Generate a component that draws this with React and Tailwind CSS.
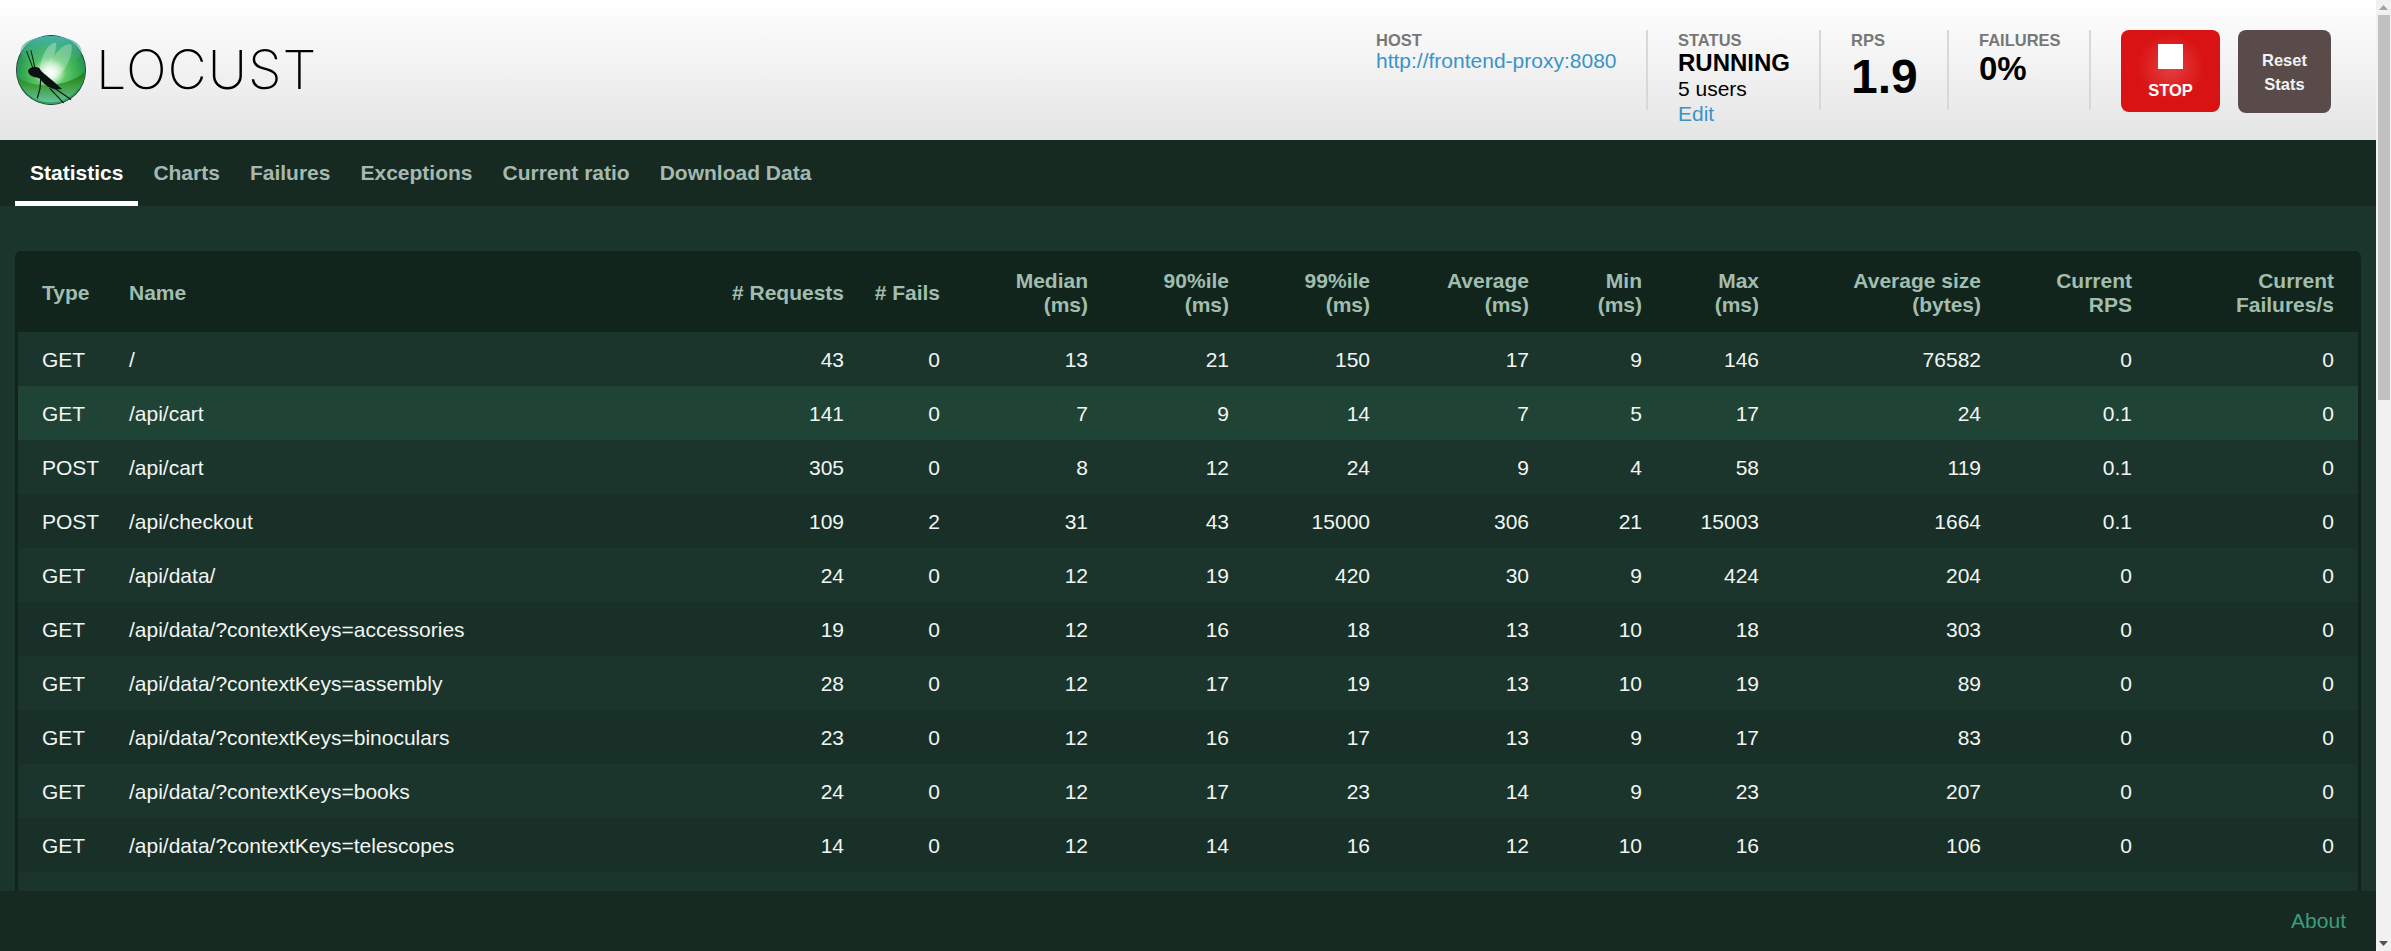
const rows = [
  ["GET", "/", 43, 0, 13, 21, 150, 17, 9, 146, 76582, 0, 0],
  ["GET", "/api/cart", 141, 0, 7, 9, 14, 7, 5, 17, 24, 0.1, 0],
  ["POST", "/api/cart", 305, 0, 8, 12, 24, 9, 4, 58, 119, 0.1, 0],
  ["POST", "/api/checkout", 109, 2, 31, 43, 15000, 306, 21, 15003, 1664, 0.1, 0],
  ["GET", "/api/data/", 24, 0, 12, 19, 420, 30, 9, 424, 204, 0, 0],
  ["GET", "/api/data/?contextKeys=accessories", 19, 0, 12, 16, 18, 13, 10, 18, 303, 0, 0],
  ["GET", "/api/data/?contextKeys=assembly", 28, 0, 12, 17, 19, 13, 10, 19, 89, 0, 0],
  ["GET", "/api/data/?contextKeys=binoculars", 23, 0, 12, 16, 17, 13, 9, 17, 83, 0, 0],
  ["GET", "/api/data/?contextKeys=books", 24, 0, 12, 17, 23, 14, 9, 23, 207, 0, 0],
  ["GET", "/api/data/?contextKeys=telescopes", 14, 0, 12, 14, 16, 12, 10, 16, 106, 0, 0],
];

const columns = [
  { label: ["Type"], w: "w-[87px]", left: true },
  { label: ["Name"], w: "w-[595px]", left: true },
  { label: ["# Requests"], w: "w-[168px]" },
  { label: ["# Fails"], w: "w-[96px]" },
  { label: ["Median", "(ms)"], w: "w-[148px]" },
  { label: ["90%ile", "(ms)"], w: "w-[141px]" },
  { label: ["99%ile", "(ms)"], w: "w-[141px]" },
  { label: ["Average", "(ms)"], w: "w-[159px]" },
  { label: ["Min", "(ms)"], w: "w-[113px]" },
  { label: ["Max", "(ms)"], w: "w-[117px]" },
  { label: ["Average size", "(bytes)"], w: "w-[222px]" },
  { label: ["Current", "RPS"], w: "w-[151px]" },
  { label: ["Current", "Failures/s"], w: "w-[202px]" },
];

const tabs = ["Statistics", "Charts", "Failures", "Exceptions", "Current ratio", "Download Data"];

function Logo() {
  return (
    <svg width="72" height="72" viewBox="45 98 216 216" className="shrink-0">
      <defs>
        <radialGradient id="sph" cx="50%" cy="55%" r="55%">
          <stop offset="0%" stopColor="#e4f9e0" />
          <stop offset="35%" stopColor="#62cc6c" />
          <stop offset="80%" stopColor="#2ea34e" />
          <stop offset="100%" stopColor="#1f8a5c" />
        </radialGradient>
        <linearGradient id="top" x1="0" y1="0" x2="0" y2="1">
          <stop offset="0%" stopColor="#46b3ad" />
          <stop offset="100%" stopColor="#4cb870" stopOpacity="0" />
        </linearGradient>
        <linearGradient id="bot" x1="0" y1="0" x2="0" y2="1">
          <stop offset="0%" stopColor="#1a7a10" />
          <stop offset="45%" stopColor="#3b9e3a" />
          <stop offset="100%" stopColor="#68c0a0" />
        </linearGradient>
        <radialGradient id="glow" cx="50%" cy="50%" r="50%">
          <stop offset="0%" stopColor="#ffffff" stopOpacity="0.95" />
          <stop offset="100%" stopColor="#ffffff" stopOpacity="0" />
        </radialGradient>
      </defs>
      <circle cx="153" cy="206" r="105" fill="#123" />
      <circle cx="153" cy="206" r="103" fill="url(#sph)" />
      <path d="M52 226 C90 262 200 262 254 212 A103 103 0 0 1 52 226 Z" fill="url(#bot)" />
      <ellipse cx="153" cy="150" rx="92" ry="46" fill="url(#top)" />
      <ellipse cx="150" cy="212" rx="50" ry="44" fill="url(#glow)" />
      <path d="M118 208 C122 170 140 125 168 124 C172 150 150 195 128 216 Z" fill="#fff" fillOpacity="0.3" />
      <path d="M128 222 C150 170 190 122 214 130 C222 165 190 225 150 236 Z" fill="#fff" fillOpacity="0.28" />
      <g stroke="#0b1612" fill="none" strokeLinecap="round">
        <path d="M98 198 L80 150" strokeWidth="3" />
        <path d="M104 196 L93 148" strokeWidth="3" />
        <path d="M122 234 L120 262 L112 290" strokeWidth="3.5" />
        <path d="M150 262 L190 304" strokeWidth="3.5" />
        <path d="M166 262 L212 294" strokeWidth="3.5" />
      </g>
      <path d="M84 210 C86 198 106 194 118 200 C122 212 146 226 186 263 C160 268 136 256 120 232 C108 226 90 230 84 210 Z" fill="#0b1310" />
    </svg>
  );
}

export default function App() {
  return (
    <div className="flex h-[951px] w-full overflow-hidden font-['Liberation_Sans',Arial,sans-serif] text-[21px] text-white">
      <div className="flex w-[2376px] shrink-0 flex-col">
        <header className="flex h-[140px] shrink-0 items-start bg-gradient-to-b from-white to-[#e4e4e4] text-black">
          <div className="flex h-full items-center gap-[9px] pl-[15px]">
            <Logo />
            <span className="font-['Inter',sans-serif] text-[54px] leading-none font-extralight tracking-[1px] text-black">LOCUST</span>
          </div>
          <div className="ml-auto flex items-start pt-[30px]">
            <div className="h-[80px] w-[272px] border-r-2 border-[#d8d8d8]">
              <div className="text-[16.5px] leading-[20px] font-bold text-[#777]">HOST</div>
              <a className="block leading-[22px] text-[#3a94c8]">http://frontend-proxy:8080</a>
            </div>
            <div className="h-[80px] w-[173px] border-r-2 border-[#d8d8d8] pl-[30px]">
              <div className="text-[16.5px] leading-[20px] font-bold text-[#777]">STATUS</div>
              <div className="text-[24px] leading-[26px] font-bold">RUNNING</div>
              <div className="leading-[26px]">5 users</div>
              <a className="block leading-[24px] text-[#3a94c8]">Edit</a>
            </div>
            <div className="h-[80px] w-[128px] border-r-2 border-[#d8d8d8] pl-[30px]">
              <div className="text-[16.5px] leading-[20px] font-bold text-[#777]">RPS</div>
              <div className="text-[48px] leading-[54px] font-bold">1.9</div>
            </div>
            <div className="h-[80px] w-[142px] border-r-2 border-[#d8d8d8] pl-[30px]">
              <div className="text-[16.5px] leading-[20px] font-bold text-[#777]">FAILURES</div>
              <div className="text-[33px] leading-[38px] font-bold">0%</div>
            </div>
            <div className="ml-[30px] flex h-[82px] w-[99px] flex-col items-center rounded-[8px] bg-[radial-gradient(circle_at_50%_45%,#e44040_0%,#d91313_50%)] pt-[14px] text-[16.5px] font-bold text-white">
              <div className="h-[25px] w-[25px] bg-white" />
              <div className="mt-[11px] leading-[20px]">STOP</div>
            </div>
            <div className="mr-[45px] ml-[18px] flex h-[83px] w-[93px] flex-col items-center justify-center rounded-[8px] bg-[#594b49] text-[16.5px] leading-[24px] font-bold text-[#f3f3f3]">
              <div>Reset</div>
              <div>Stats</div>
            </div>
          </div>
        </header>

        <nav className="flex h-[66px] shrink-0 bg-[#162a22] pl-[15px]">
          {tabs.map((t, i) => (
            <div
              key={t}
              className={
                i === 0
                  ? "flex h-full items-center border-b-[5px] border-white px-[15px] pt-[4px] font-bold text-white"
                  : "flex h-full items-center border-b-[5px] border-transparent px-[15px] pt-[4px] font-bold text-[#a6b8af]"
              }
            >
              {t}
            </div>
          ))}
        </nav>

        <main className="min-h-0 flex-1 overflow-hidden bg-[#1b352c] px-[15px] pt-[45px]">
          <div className="overflow-hidden rounded-[6px] border-[3px] border-[#12251c]">
            <table className="w-full table-fixed border-collapse">
              <thead className="bg-[#12251c] text-[#a0bdb0]">
                <tr className="h-[78px]">
                  {columns.map((c) => (
                    <th
                      key={c.label.join()}
                      className={
                        c.left
                          ? c.w + " pl-[24px] text-left font-bold leading-[24px]"
                          : c.w + " pr-[24px] text-right font-bold leading-[24px]"
                      }
                    >
                      {c.label.map((l) => (
                        <div key={l}>{l}</div>
                      ))}
                    </th>
                  ))}
                </tr>
              </thead>
              <tbody>
                {rows.map((r, i) => (
                  <tr
                    key={i}
                    className={
                      i === 1
                        ? "h-[54px] bg-[#1f4435] text-[#f2f5f3]"
                        : i % 2 === 0
                          ? "h-[54px] bg-[#1b352c] text-[#f2f5f3]"
                          : "h-[54px] bg-[#183027] text-[#f2f5f3]"
                    }
                  >
                    {r.map((v, j) => (
                      <td
                        key={j}
                        className={j < 2 ? "truncate pt-[2px] pl-[24px] text-left" : "pt-[2px] pr-[24px] text-right"}
                      >
                        {v}
                      </td>
                    ))}
                  </tr>
                ))}
                <tr className="h-[54px] bg-[#1b352c]">
                  <td colSpan={13} />
                </tr>
              </tbody>
            </table>
          </div>
        </main>

        <footer className="flex h-[60px] shrink-0 items-center justify-end bg-[#162a22] pr-[30px] text-[#3f9c7d]">
          About
        </footer>
      </div>

      <div className="flex w-[15px] shrink-0 flex-col bg-[#f1f1f1]">
        <div className="flex h-[15px] items-center justify-center">
          <svg width="9" height="5" viewBox="0 0 9 5"><path d="M4.5 0 L9 5 L0 5 Z" fill="#a3a3a3" /></svg>
        </div>
        <div className="ml-[2px] h-[385px] w-[12px] bg-[#c1c1c1]" />
        <div className="flex-1" />
        <div className="flex h-[15px] items-center justify-center">
          <svg width="9" height="5" viewBox="0 0 9 5"><path d="M0 0 L9 0 L4.5 5 Z" fill="#505050" /></svg>
        </div>
      </div>
    </div>
  );
}
